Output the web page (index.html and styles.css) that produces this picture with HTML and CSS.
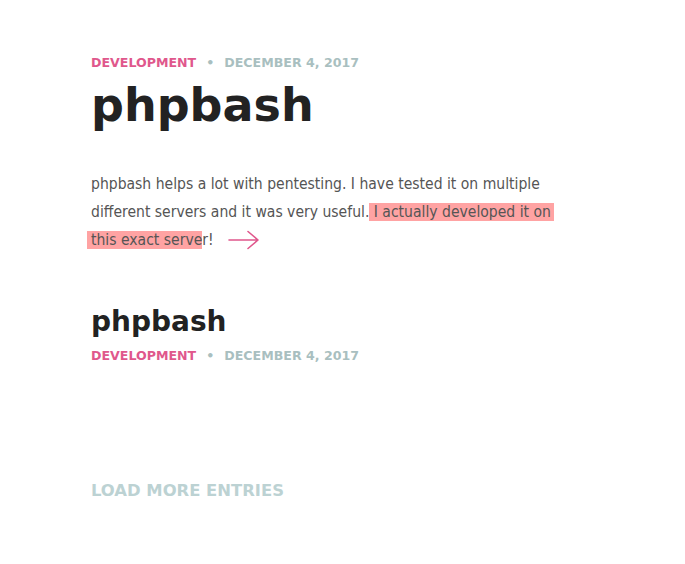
FILE: index.html
```html
<!DOCTYPE html>
<html>
<head>
<meta charset="utf-8">
<link rel="stylesheet" href="styles.css">
</head>
<body>
<main class="blog">
  <article class="post">
    <div class="meta"><span class="cat">Development</span><span class="dot">•</span><span class="date">December 4, 2017</span></div>
    <h1 class="title">phpbash</h1>
    <p class="excerpt">phpbash helps a lot with pentesting. I have tested it on multiple different servers and it was very useful.<span class="hl hl-a"> I actually developed it on</span> <span class="hl hl-b">this exact serve</span>r!<svg class="arrow" width="32" height="20" viewBox="0 0 32 20"><path d="M1 10 H30 M20 1.5 L30 10 L20 18.5" fill="none" stroke="#e0578c" stroke-width="1.6" stroke-linecap="round" stroke-linejoin="round"/></svg></p>
  </article>
  <article class="post post-small">
    <h2 class="title-small">phpbash</h2>
    <div class="meta meta-small"><span class="cat">Development</span><span class="dot">•</span><span class="date">December 4, 2017</span></div>
  </article>
  <a class="more" href="#">Load more entries</a>
</main>
</body>
</html>
```
FILE: styles.css
```css
html, body {
  margin: 0;
  padding: 0;
  background: #fff;
}
body {
  font-family: "DejaVu Sans", Verdana, sans-serif;
}
.blog {
  padding: 53px 0 0 91px;
  display: flex;
  flex-direction: column;
  align-items: flex-start;
}
.post {
  display: flex;
  flex-direction: column;
}
.meta {
  font-size: 12.6px;
  line-height: 20px;
  font-weight: bold;
  text-transform: uppercase;
  display: flex;
  align-items: center;
}
.cat {
  color: #e0578c;
}
.dot {
  color: #a9bfc0;
  margin: 0 10px;
}
.date {
  color: #a9bfc0;
}
.title {
  margin: 7px 0 0;
  font-size: 46px;
  line-height: 50.6px;
  font-weight: bold;
  color: #222;
}
.excerpt {
  margin: 39px 0 0;
  width: 475px;
  font-family: "DejaVu Sans Condensed", "DejaVu Sans", sans-serif;
  font-stretch: condensed;
  font-size: 15.55px;
  line-height: 28px;
  color: #555;
}
.hl {
  background: #ffa3a3;
}
.hl-a {
  padding-right: 3px;
}
.hl-b {
  margin-left: -4px;
  padding-left: 4px;
}
.arrow {
  vertical-align: -5px;
  margin-left: 14px;
}
.post-small {
  margin-top: 51px;
}
.title-small {
  margin: 0;
  font-size: 28px;
  line-height: 33.6px;
  font-weight: bold;
  color: #222;
}
.meta-small {
  margin-top: 8px;
}
.more {
  margin-top: 115px;
  font-size: 16.4px;
  font-weight: bold;
  text-transform: uppercase;
  color: #bcd2d3;
  text-decoration: none;
}
```
